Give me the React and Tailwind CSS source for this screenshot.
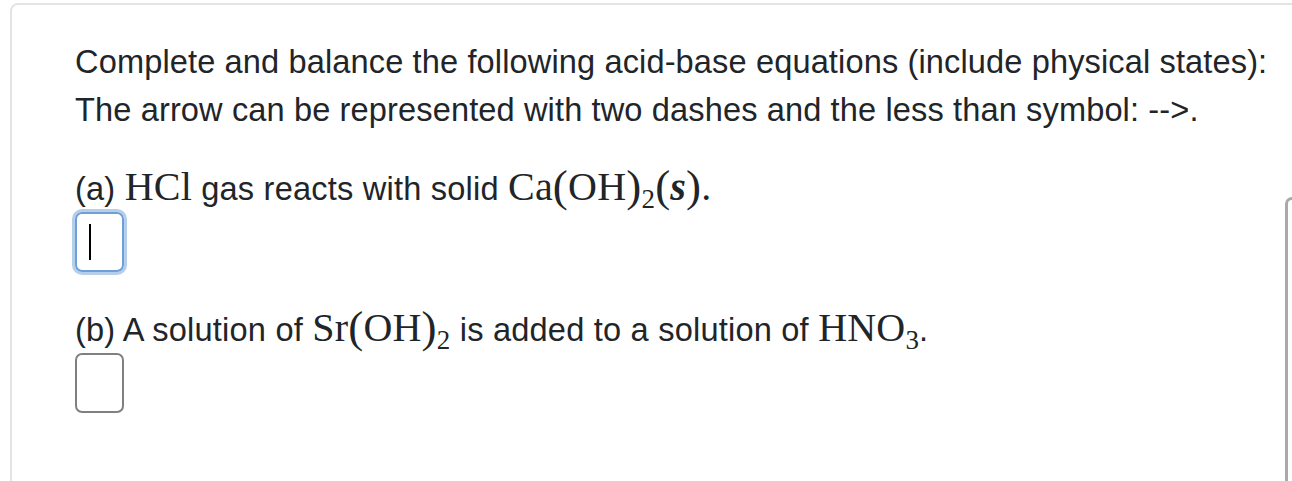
const SANS = { fontFamily: '"Liberation Sans", Arial, sans-serif' }

function M({ children }) {
  return <span className="font-['Liberation_Serif',serif] text-[40px]">{children}</span>
}

function Paren({ children }) {
  return <span className="text-[45px] leading-none relative top-[1px]">{children}</span>
}

function Sub({ children }) {
  return <span className="text-[27px] relative top-[8px]">{children}</span>
}

export default function App() {
  return (
    <div className="relative w-[1292px] h-[481px] overflow-hidden bg-white" style={SANS}>
      {/* side panel edge */}
      <div className="absolute left-[1285px] top-[197px] w-[30px] h-[320px] border-l-[3px] border-t-[3px] border-[#a9a9a9] rounded-tl-[7px]" />

      <div className="ml-[10px] mt-[3px] w-[1320px] h-[520px] border-2 border-[#e4e4e4] rounded-tl-[8px] pl-[63px] pt-[33px] text-[#212529] text-[32.6px] leading-[48px] flex flex-col">
        <div className="flex flex-col tracking-[0.12px]">
          <p>Complete and balance the following acid-base equations (include physical states):</p>
          <p>The arrow can be represented with two dashes and the less than symbol: --&gt;.</p>
        </div>

        <div className="flex flex-col items-start mt-[29px]">
          <p className="whitespace-nowrap h-[48px] tracking-[0.2px]">
            (a) <M>HCl</M> gas reacts with solid{' '}
            <M>
              Ca<Paren>(</Paren>OH<Paren>)</Paren><Sub>2</Sub><Paren>(</Paren><i className="font-bold">s</i><Paren>)</Paren>.
            </M>
          </p>
          <div className="mt-[1px] w-[49px] h-[60px] border-2 border-[#6f9fd6] rounded-[7px] shadow-[0_0_0_3px_rgba(120,165,220,0.55)] flex items-center pl-[12px]">
            <span className="w-[2px] h-[36px] bg-black" />
          </div>
        </div>

        <div className="flex flex-col items-start mt-[32px]">
          <p className="whitespace-nowrap h-[48px] tracking-[0.2px]">
            (b) A solution of{' '}
            <M>
              Sr<Paren>(</Paren>OH<Paren>)</Paren><Sub>2</Sub>
            </M>{' '}
            is added to a solution of{' '}
            <M>
              HNO<Sub>3</Sub>
            </M>
            .
          </p>
          <div className="mt-[1px] w-[49px] h-[60px] border-2 border-[#808080] rounded-[7px]" />
        </div>
      </div>
    </div>
  )
}
